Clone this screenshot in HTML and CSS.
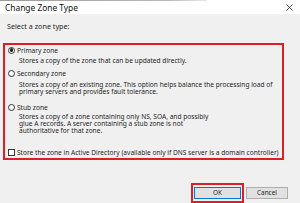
FILE: index.html
```html
<!DOCTYPE html>
<html>
<head>
<meta charset="utf-8">
<link rel="stylesheet" href="styles.css">
</head>
<body>
<div class="window">
  <div class="edge"><div class="edge-dark"></div></div>
  <div class="titlebar">
    <span class="title">Change Zone Type</span>
    <svg class="close" width="7" height="7" viewBox="0 0 7 7"><path d="M0.5 0.5L6.5 6.5M6.5 0.5L0.5 6.5" stroke="#222" stroke-width="0.8" fill="none"/></svg>
  </div>
  <div class="content">
    <div class="prompt">Select a zone type:</div>
    <div class="group">
      <div class="option opt-primary">
        <span class="radio checked"></span><span>Primary zone</span>
      </div>
      <div class="desc d-primary">Stores a copy of the zone that can be updated directly.</div>
      <div class="option opt-secondary">
        <span class="radio"></span><span>Secondary zone</span>
      </div>
      <div class="desc d-secondary">Stores a copy of an existing zone. This option helps balance the processing load of<br>primary servers and provides fault tolerance.</div>
      <div class="option opt-stub">
        <span class="radio"></span><span>Stub zone</span>
      </div>
      <div class="desc d-stub">Stores a copy of a zone containing only NS, SOA, and possibly<br>glue A records. A server containing a stub zone is not<br>authoritative for that zone.</div>
      <div class="option opt-ad">
        <span class="check"></span><span>Store the zone in Active Directory (available only if DNS server is a domain controller)</span>
      </div>
    </div>
    <div class="buttons">
      <div class="highlight"><div class="btn btn-ok">OK</div></div>
      <div class="btn btn-cancel">Cancel</div>
    </div>
  </div>
</div>
</body>
</html>
```
FILE: styles.css
```css
* { box-sizing: border-box; }
html, body { margin: 0; padding: 0; }
body {
  width: 300px;
  height: 203px;
  overflow: hidden;
  background: #f0f0f0;
  font-family: "Noto Sans", "Open Sans", sans-serif;
  color: #1e1e1e;
}
.window { width: 300px; height: 203px; display: flex; flex-direction: column; }
.edge { height: 2px; background: #ffffff; display: flex; }
.edge-dark { width: 207px; background: linear-gradient(90deg, #9a9a9a, #b8b8b8 80%, #e8e8e8); }
.titlebar {
  height: 17px;
  background: #ffffff;
  display: flex;
  align-items: center;
  justify-content: space-between;
  padding: 0 7px 0 5px;
}
.title { font-size: 8.4px; color: #111; line-height: 9px; }
.close { display: block; margin-top: -1px; }
.content { padding: 8px 0 0 3px; display: flex; flex-direction: column; }
.prompt { font-size: 7.2px; line-height: 8px; margin-left: 4px; margin-bottom: 13px; }
.group {
  width: 281px;
  border: 2px solid #dc1f26;
  padding: 0 0 0 2px;
  display: flex;
  flex-direction: column;
  font-size: 6.6px;
  line-height: 7px;
}
.option { display: flex; align-items: center; height: 10px; }
.radio {
  width: 7px; height: 7px; border-radius: 50%;
  border: 0.8px solid #333;
  background: #fff;
  margin: 0 2px 0 1px;
  display: flex; align-items: center; justify-content: center;
}
.radio.checked::after {
  content: ""; width: 3.5px; height: 3.5px; border-radius: 50%; background: #222;
}
.check {
  width: 7px; height: 7px; border: 0.8px solid #333; background: #fff;
  margin: 0 2px 0 1px;
}
.desc { margin-left: 12px; }
.d-primary { margin-top: 2px; }
.opt-secondary { margin-top: 4px; }
.d-secondary { margin-top: 3px; }
.opt-stub { margin-top: 7px; }
.d-stub { margin-top: 1px; }
.opt-ad { margin-top: 13px; margin-bottom: 1px; }
.buttons { display: flex; justify-content: flex-end; align-items: center; margin-top: 23px; padding-right: 12px; gap: 2px; }
.highlight { border: 2px solid #dc1f26; padding: 2px 1px; }
.btn {
  height: 12px;
  font-size: 6.4px;
  line-height: 10px;
  text-align: center;
  background: #e1e1e1;
  border: 1px solid #adadad;
}
.btn-ok { width: 47px; border-color: #0078d7; }
.btn-cancel { width: 42px; }
```
